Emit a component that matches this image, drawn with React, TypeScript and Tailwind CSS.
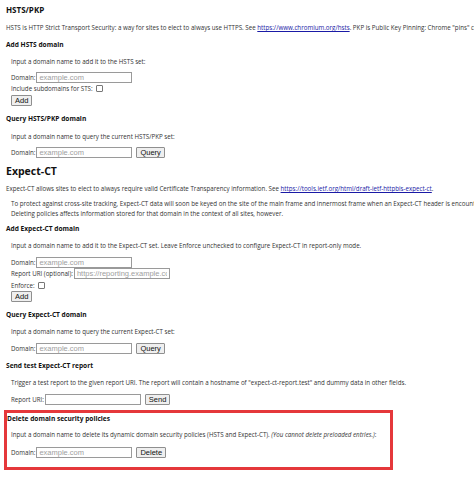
import React from 'react'

const font = { fontFamily: '"Open Sans", "Noto Sans", Arial, sans-serif' }
const ctrlFont = { fontFamily: '"Liberation Sans", Arial, sans-serif' }

function TextInput({ placeholder = '', w = 'w-[96px]' }: { placeholder?: string; w?: string }) {
  return (
    <input
      type="text"
      placeholder={placeholder}
      style={ctrlFont}
      className={`${w} h-[11px] border border-[#9a9a9a] bg-white px-[2px] text-[7.5px] leading-[9px] text-[#222] placeholder:text-[#a0a0a0] outline-none`}
    />
  )
}

function Btn({ label }: { label: string }) {
  return (
    <button
      style={ctrlFont}
      className="flex items-center h-[11px] border border-[#8f8f8f] bg-[#efefef] px-[3px] text-[7.5px] leading-[9px] text-[#111] rounded-[1px]"
    >
      {label}
    </button>
  )
}

function Check() {
  return <span className="inline-block w-[7px] h-[7px] border border-[#777] rounded-[1px] bg-white ml-[3px]" />
}

function H3({ children, className = '' }: { children: React.ReactNode; className?: string }) {
  return <div className={`h-[10px] leading-[10px] text-[6.6px] font-bold text-[#111] ${className}`}>{children}</div>
}

function P({ children, className = '' }: { children: React.ReactNode; className?: string }) {
  return <div className={`h-[10px] leading-[10px] text-[6.2px] text-[#333] ${className}`}>{children}</div>
}

function Row({ children, className = '' }: { children: React.ReactNode; className?: string }) {
  return <div className={`flex items-center h-[11px] text-[6.2px] text-[#333] ${className}`}>{children}</div>
}

export default function App() {
  return (
    <div className="w-[474px] h-[478px] overflow-hidden bg-white whitespace-nowrap" style={font}>
      <div className="flex flex-col pl-[6px] pt-[4px]">
        <div className="h-[12px] leading-[12px] text-[8px] font-bold text-[#111]">HSTS/PKP</div>
        <P className="mt-[7px]">
          HSTS is HTTP Strict Transport Security: a way for sites to elect to always use HTTPS. See{' '}
          <a className="text-[#1a1aa6] underline">https://www.chromium.org/hsts</a>. PKP is Public Key Pinning: Chrome "pins" certificates to specific domains.
        </P>
        <H3 className="mt-[7px]">Add HSTS domain</H3>
        <div className="flex flex-col pl-[5px]">
          <P className="mt-[7px]">Input a domain name to add it to the HSTS set:</P>
          <Row className="mt-[5px]">
            <span className="mr-[1px]">Domain:</span>
            <TextInput placeholder="example.com" />
          </Row>
          <Row className="h-[10px]">
            Include subdomains for STS: <Check />
          </Row>
          <div className="flex mt-[1px]"><Btn label="Add" /></div>
        </div>
        <H3 className="mt-[8px]">Query HSTS/PKP domain</H3>
        <div className="flex flex-col pl-[5px]">
          <P className="mt-[8px]">Input a domain name to query the current HSTS/PKP set:</P>
          <Row className="mt-[5px] gap-[4px]">
            <span className="-mr-[3px]">Domain:</span>
            <TextInput placeholder="example.com" />
            <Btn label="Query" />
          </Row>
        </div>
        <div className="mt-[7px] h-[12px] leading-[12px] text-[10.5px] font-bold text-[#111]">Expect-CT</div>
        <P className="mt-[7px]">
          Expect-CT allows sites to elect to always require valid Certificate Transparency information. See{' '}
          <a className="text-[#1a1aa6] underline">https://tools.ietf.org/html/draft-ietf-httpbis-expect-ct</a>.
        </P>
        <div className="flex flex-col pl-[5px] mt-[5px]">
          <P>To protect against cross-site tracking, Expect-CT data will soon be keyed on the site of the main frame and innermost frame when an Expect-CT header is encountered.</P>
          <P>Deleting policies affects information stored for that domain in the context of all sites, however.</P>
        </div>
        <H3 className="mt-[5px]">Add Expect-CT domain</H3>
        <div className="flex flex-col pl-[5px]">
          <P className="mt-[7px]">Input a domain name to add it to the Expect-CT set. Leave Enforce unchecked to configure Expect-CT in report-only mode.</P>
          <Row className="mt-[6px]">
            <span className="mr-[1px]">Domain:</span>
            <TextInput placeholder="example.com" />
          </Row>
          <Row>
            <span className="mr-[1px]">Report URI (optional):</span>
            <TextInput placeholder="https://reporting.example.com" />
          </Row>
          <Row className="mt-[1px] h-[10px]">
            Enforce: <Check />
          </Row>
          <div className="flex"><Btn label="Add" /></div>
        </div>
        <H3 className="mt-[8px]">Query Expect-CT domain</H3>
        <div className="flex flex-col pl-[5px]">
          <P className="mt-[7px]">Input a domain name to query the current Expect-CT set:</P>
          <Row className="mt-[6px] gap-[4px]">
            <span className="-mr-[3px]">Domain:</span>
            <TextInput placeholder="example.com" />
            <Btn label="Query" />
          </Row>
        </div>
        <H3 className="mt-[7px]">Send test Expect-CT report</H3>
        <div className="flex flex-col pl-[5px]">
          <P className="mt-[7px]">Trigger a test report to the given report URI. The report will contain a hostname of "expect-ct-report.test" and dummy data in other fields.</P>
          <Row className="mt-[6px] gap-[4px]">
            <span className="-mr-[3px]">Report URI:</span>
            <TextInput />
            <Btn label="Send" />
          </Row>
        </div>
      </div>
      <div className="mt-[5px] ml-[4px] w-[389px] h-[60px] border-[3px] border-[#e5383b] flex flex-col pt-[1px]">
        <H3>Delete domain security policies</H3>
        <div className="flex flex-col pl-[4px]">
          <P className="mt-[6px]">
            Input a domain name to delete its dynamic domain security policies (HSTS and Expect-CT). <i>(You cannot delete preloaded entries.)</i>:
          </P>
          <Row className="mt-[7px] gap-[4px]">
            <span className="-mr-[3px]">Domain:</span>
            <TextInput placeholder="example.com" />
            <Btn label="Delete" />
          </Row>
        </div>
      </div>
    </div>
  )
}
